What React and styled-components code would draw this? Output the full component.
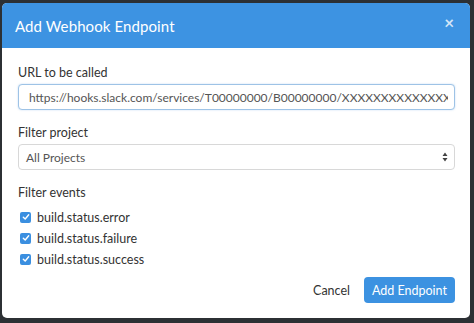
import React from 'react'
import styled, { createGlobalStyle } from 'styled-components'

const GlobalStyle = createGlobalStyle`
  html, body { margin: 0; padding: 0; }
  body {
    background: #2c3034;
    font-family: Lato, "Open Sans", sans-serif;
    width: 474px;
    height: 323px;
    overflow: hidden;
  }
`

const Backdrop = styled.div`
  padding: 3px 4px 5px 2px;
  height: 323px;
  box-sizing: border-box;
`

const Modal = styled.div`
  background: #fff;
  border-radius: 5px;
  height: 315px;
  display: flex;
  flex-direction: column;
  overflow: hidden;
`

const Header = styled.div`
  background: #3d93e2;
  height: 45px;
  flex-shrink: 0;
  padding: 0 16px 0 13px;
  display: flex;
  align-items: center;
  justify-content: space-between;
  h3 {
    margin: 0;
    color: #fff;
    font-size: 15px;
    font-weight: 400;
    letter-spacing: 0.1px;
  }
`

const Close = styled.span`
  color: #d3e5f7;
  font-size: 17px;
  font-weight: 700;
  line-height: 1;
  margin-top: -6px;
`

const Body = styled.div`
  padding: 17px 15px 0 16px;
  display: flex;
  flex-direction: column;
`

const Label = styled.div`
  font-size: 12.5px;
  line-height: 15px;
  color: #333;
  margin-bottom: 4px;
`

const UrlInput = styled.input`
  height: 26px;
  box-sizing: border-box;
  width: 100%;
  border: 1px solid #9ec3e6;
  border-radius: 4px;
  padding: 0 6px 0 10px;
  font: inherit;
  font-size: 12px;
  color: #555;
  margin: 0 0 15px 0;
  outline: none;
  box-shadow: 0 0 2px rgba(80, 150, 220, 0.35);
`

const Select = styled.div`
  height: 26px;
  box-sizing: border-box;
  border: 1px solid #d8d8d8;
  border-radius: 4px;
  display: flex;
  align-items: center;
  justify-content: space-between;
  padding: 0 6px 0 7px;
  font-size: 12px;
  color: #555;
  margin-bottom: 15px;
`

const Checks = styled.div`
  display: flex;
  flex-direction: column;
  gap: 5px;
  margin-top: 5px;
`

const CheckRow = styled.label`
  display: flex;
  align-items: center;
  gap: 6px;
  font-size: 12.5px;
  color: #333;
  height: 16px;
`

const Box = styled.span`
  width: 11px;
  height: 11px;
  border-radius: 2px;
  background: #3b8fe0;
  display: flex;
  align-items: center;
  justify-content: center;
  margin-left: 2px;
`

const Footer = styled.div`
  display: flex;
  justify-content: flex-end;
  align-items: center;
  gap: 14px;
  padding: 10px 15px 0 0;
`

const TextButton = styled.button`
  border: none;
  background: none;
  font: inherit;
  font-size: 12.5px;
  color: #333;
  padding: 0;
`

const PrimaryButton = styled.button`
  border: none;
  background: #3c92e1;
  color: #fff;
  font: inherit;
  font-size: 12.5px;
  height: 26px;
  width: 91px;
  border-radius: 4px;
  padding: 0;
`

const Check = ({ label }) => (
  <CheckRow>
    <Box>
      <svg width="8" height="8" viewBox="0 0 8 8">
        <path d="M1.3 4.2 L3.2 6 L6.7 1.8" stroke="#fff" strokeWidth="1.4" fill="none" strokeLinecap="round" strokeLinejoin="round" />
      </svg>
    </Box>
    {label}
  </CheckRow>
)

export default function App() {
  return (
    <Backdrop>
      <GlobalStyle />
      <Modal>
        <Header>
          <h3>Add Webhook Endpoint</h3>
          <Close>×</Close>
        </Header>
        <Body>
          <Label>URL to be called</Label>
          <UrlInput readOnly value="https://hooks.slack.com/services/T00000000/B00000000/XXXXXXXXXXXXXXXXXXXXXXXX" />
          <Label>Filter project</Label>
          <Select>
            All Projects
            <svg width="6" height="10" viewBox="0 0 6 10">
              <path d="M3 0.5 L5.5 4 L0.5 4 Z M3 9.5 L5.5 6 L0.5 6 Z" fill="#444" />
            </svg>
          </Select>
          <Label>Filter events</Label>
          <Checks>
            <Check label="build.status.error" />
            <Check label="build.status.failure" />
            <Check label="build.status.success" />
          </Checks>
        </Body>
        <Footer>
          <TextButton>Cancel</TextButton>
          <PrimaryButton>Add Endpoint</PrimaryButton>
        </Footer>
      </Modal>
    </Backdrop>
  )
}
